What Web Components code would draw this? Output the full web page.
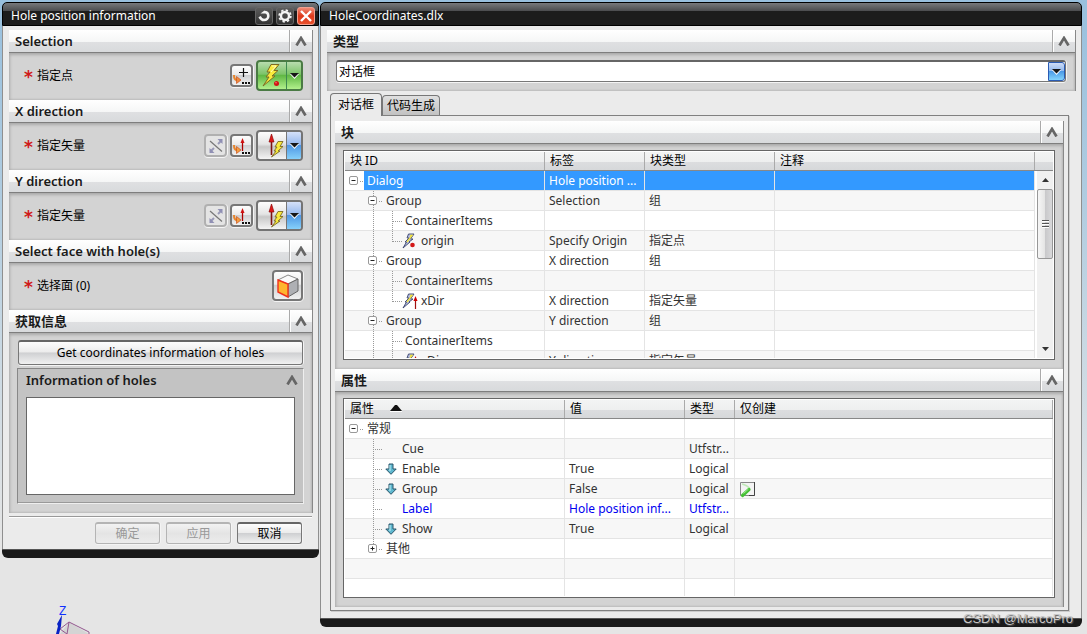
<!DOCTYPE html>
<html lang="zh-CN">
<head>
<meta charset="utf-8">
<title>HoleCoordinates.dlx</title>
<style>
  html {
    min-height: 100%;
    background: linear-gradient(#98c0de 0, #b0cce0 200px, #c8d8e3 340px, #e5e5e5 540px);
  }

  body {
    margin: 0;
    font: 12px/20px "Noto Sans", "Noto Sans CJK SC", sans-serif;
    color: #1a1a1a;
  }
</style>
</head>
<body>
<block-styler></block-styler>

<script>
// ----- Icons -----
const ICONS = {
  reset: [12, 12, `<path d="M6 2c3 0 4.300 1.800 4.300 4S8.600 10 6 10 2.500 8.600 1.600 6.600" fill="none" stroke="#f4f4f4" stroke-width="2.6"/><path d="M2.500 3.500h4v-3z" fill="#f4f4f4"/>`],
  gear: [14, 14, `<circle cx="7" cy="7" r="4" fill="none" stroke="#f4f4f4" stroke-width="2.4"/><circle cx="7" cy="7" r="5.8" fill="none" stroke="#f4f4f4" stroke-width="1.8" stroke-dasharray="2.3 2.255"/>`],
  close: [14, 14, `<path d="M2 2l10 10M12 2L2 12" stroke="#fff" stroke-width="2.4"/>`],
  up: [12, 10, `<path d="M1.500 9.500L6 2l4.500 7.500" fill="none" stroke="#666" stroke-width="2.7"/>`],
  down: [9, 9, `<path d="M0 3h9L4.5 8z" fill="#fff"/><path d="M0 2h9L4.5 6.5z" fill="#161616"/>`],
  sort: [12, 8, `<path d="M0 7h12v1H0z" fill="#fff"/><path d="M0 7l5-6h2l5 6z" fill="#111"/>`],
  tiny: [7, 4, `<path d="M0 4l3.5-4L7 4z" fill="#333"/>`],
  point: [20, 20, `<path d="M11.500 2v9M7 6.500h9" stroke="#111" stroke-width="1.2"/><path d="M2 9c0 4 1 5 3 5" fill="none" stroke="#e8852a" stroke-width="2"/><path d="M4.500 10.500l4.500 3.500-4.500 3.500z" fill="#f08a3c" stroke="#c8501c" stroke-width=".7"/><path d="M10 16h2v2h-2zm3 0h2v2h-2zm3 0h2v2h-2z" fill="#111"/>`],
  vector: [20, 20, `<path d="M10.500 6v9" stroke="#a00" stroke-width="1.3"/><path d="M8.500 7l2-5 2 5z" fill="#d01010"/><path d="M2 9c0 4 1 5 3 5" fill="none" stroke="#e8852a" stroke-width="2"/><path d="M4.500 10.500l4.500 3.500-4.500 3.500z" fill="#f5a040" stroke="#c8501c" stroke-width=".7"/><path d="M10 16h2v2h-2zm3 0h2v2h-2zm3 0h2v2h-2z" fill="#111"/>`],
  flip: [20, 20, `<path d="M4 5l12 10.500" stroke="#777" stroke-width="1.2"/><path d="M5 15l3-3M12 8l3-3" stroke="#9a9ab8" stroke-width="2"/><path d="M11.500 3h5v5zM3.500 12v5h5z" fill="#9090b4"/>`],
  bolt: [26, 26, `<path d="M12 1.500h8l-5 6h4l-6 5.500h3L4 23l6-9H7l4-5H8z" fill="#f8ea3c" stroke="#7d6a24" stroke-width="1"/><path d="M13 3h4l-5 6" fill="none" stroke="#fffbc0" stroke-width="1"/><circle cx="17.500" cy="20.500" r="2.500" fill="#d21414"/><circle cx="17" cy="19.700" r=".8" fill="#f77"/>`],
  boltVector: [26, 26, `<path d="M12.500 8v14" stroke="#7c1414" stroke-width="1.6"/><path d="M10 9l2.500-8L15 9z" fill="#e01818" stroke="#8e0c0c" stroke-width=".7"/><path d="M19 8.500h5l-3 5h3L19 18h2l-8.500 6L17 18h-2l3-4h-2z" fill="#f8ea3c" stroke="#7d6a24" stroke-width=".9"/>`],
  cube: [26, 26, `<path d="M13 2l10 4-10 5L3 7z" fill="#fafafa" stroke="#888"/><path d="M13 11l10-5v12l-10 6z" fill="#aeb0b4" stroke="#666"/><path d="M3 7l10 4v13L3 19z" fill="#ffb52e" stroke="#f0301c" stroke-width="1.4"/>`],
  originItem: [16, 16, `<path d="M6.500 1H12L8.500 6H11L7 9h1L1 15l3.500-6H3l4-4H5z" fill="#b7bfdc" stroke="#38426e" stroke-width=".9"/><path d="M8 2.500h2L6.500 7 5 9" fill="none" stroke="#f1e23e" stroke-width="1.3"/><circle cx="10.500" cy="12" r="2.300" fill="#d31818"/>`],
  vectorItem: [16, 16, `<path d="M6.500 1H12L8.500 6H11L7 9h1L1 15l3.500-6H3l4-4H5z" fill="#b7bfdc" stroke="#38426e" stroke-width=".9"/><path d="M8 2.500h2L6.500 7 5 9" fill="none" stroke="#f1e23e" stroke-width="1.3"/><path d="M13.500 6v10" stroke="#a01010" stroke-width="1.2"/><path d="M11.500 8l2-5 2 5z" fill="#c00"/>`],
  arrowItem: [12, 12, `<path d="M4 1h4v5h3.200L6 11.300.8 6H4z" fill="#5fb8cf" stroke="#28556a" stroke-width="1"/><path d="M5 2v6" stroke="#c8f2f8" stroke-width="1"/>`],
  check: [17, 17, `<path d="M1.500 1.500h14v13h-14z" fill="#f4f4f4" stroke="#888"/><path d="M15.500 1v13.500H10" fill="none" stroke="#444"/><path d="M3 3q5 1 8 5" fill="none" stroke="#c0e8b8" stroke-width="1.5"/><path d="M3.500 14.500L10 8.500" stroke="#44c034" stroke-width="3.2" stroke-linecap="round"/><path d="M4.500 12.500l5-4.500" stroke="#9cec8c"/>`]
};

function icon(name) {
  const [w, h, body] = ICONS[name];
  return `<svg width="${w}" height="${h}" viewBox="0 0 ${w} ${h}" aria-hidden="true">${body}</svg>`;
}

// shared look of the grey push buttons
const BUTTON_CSS = `
  button {
    display: flex;
    align-items: center;
    justify-content: center;
    box-sizing: border-box;
    margin: 0;
    padding: 0;
    border: 1px solid #777;
    border-top: 2px solid #666;
    border-radius: 3px;
    background: linear-gradient(#fdfdfd 0, #ececec 45%, #cfd0d2 50%, #f1f1f1 100%);
    box-shadow: 0 1px #f4f4f4, 1px 0 #f4f4f4;
    font: inherit;
    color: #000;
  }
  button:disabled {
    border-color: #b4b4b4;
    background: linear-gradient(#f2f2f2, #e4e4e4 50%, #ececec);
    color: #999;
  }
`;

// ----- Window with title bar -----
class NxWindow extends HTMLElement {
  constructor() {
    super();
    this.attachShadow({ mode: "open" }).innerHTML = `
      <style>
        :host { display: block; }
        header {
          display: flex;
          align-items: center;
          box-sizing: border-box;
          height: 24px;
          padding: 3px 3px 0 8px;
          border: 1px solid #000;
          border-radius: 5px 5px 0 0;
          background: linear-gradient(#77797c 0, #4b4c4e 8px, #1c1c1c 8px);
          color: #fff;
        }
        h1 { flex: 1; margin: 0; font-size: 12px; font-weight: 400; line-height: 20px; }
        main {
          padding: 4px 5px 0 6px;
          border: solid #8f8f8f;
          border-width: 0 1px;
          background: #ebebeb;
        }
        footer {
          height: 8px;
          border-top: 1px solid #555;
          border-radius: 0 0 6px 6px;
          background: #1a1a1a;
        }
      </style>
      <header><h1>${this.getAttribute("heading")}</h1><slot name="tools"></slot></header>
      <main><slot></slot></main>
      <footer></footer>
    `;
  }
}

class WindowTools extends HTMLElement {
  constructor() {
    super();
    this.attachShadow({ mode: "open" }).innerHTML = `
      <style>
        :host { display: flex; gap: 3px; }
        button {
          display: flex;
          align-items: center;
          justify-content: center;
          width: 18px;
          height: 18px;
          padding: 0;
          border: 1px solid #666;
          border-radius: 3px;
          background: linear-gradient(#5c5c5c, #333);
        }
        .close { border-color: #f0a090; background: linear-gradient(#f08a74, #dd3a1c 50%, #e8502c); }
      </style>
      <button aria-label="Reset">${icon("reset")}</button>
      <button aria-label="Settings">${icon("gear")}</button>
      <button class="close" aria-label="Close">${icon("close")}</button>
    `;
  }
}

// ----- Collapsible section -----
class NxSection extends HTMLElement {
  constructor() {
    super();
    this.attachShadow({ mode: "open" }).innerHTML = `
      <style>
        :host { display: block; border-right: 1px solid #888; }
        header {
          display: flex;
          height: 22px;
          border-bottom: 1px solid #7e7e7e;
          background: linear-gradient(#fff 0, #f5f6f6 12px, #dfe0e2 12px, #d8dadc 100%);
        }
        h2 { flex: 1; margin: 0; padding-left: 6px; font-size: 13px; font-weight: 600; line-height: 22px; }
        button {
          display: flex;
          align-items: center;
          justify-content: center;
          width: 23px;
          padding: 0;
          border: 0;
          border-left: 1px solid #aaa;
          background: none;
          box-shadow: inset 1px 0 #fff;
        }
        div {
          padding: var(--section-padding, 6px 8px 9px);
          background: #d3d3d3;
          box-shadow: inset 1px 2px 3px #aaa, inset -1px -1px 2px #bbb;
        }
      </style>
      <header>
        <h2>${this.getAttribute("heading")}</h2>
        <button aria-label="Collapse">${icon("up")}</button>
      </header>
      <div><slot></slot></div>
    `;
  }
}

// ----- Required input row: label and its buttons -----
class PickRow extends HTMLElement {
  constructor() {
    super();
    const kind = this.getAttribute("kind");
    const small = (name, off) => `<button class="small" aria-label="${name}" ${off ? "disabled" : ""}>${icon(name)}</button>`;
    const split = (name) => `
      <span class="split ${kind}">
        <button aria-label="${name}">${icon(name)}</button>
        <button class="menu" aria-label="Options">${icon("down")}</button>
      </span>`;
    const tools = {
      point: small("point") + split("bolt"),
      vector: small("flip", true) + small("vector") + split("boltVector"),
      face: `<button class="large" aria-label="Face">${icon("cube")}</button>`
    };

    this.attachShadow({ mode: "open" }).innerHTML = `
      <style>
        ${BUTTON_CSS}
        :host { display: flex; align-items: center; gap: 3px; height: 31px; }
        .star { width: 10px; color: #d01818; font: 700 17px/20px "DejaVu Sans", sans-serif; padding-top: 2px; }
        .label { flex: 1; color: #000; }
        svg { flex: none; }
        .small { width: 23px; height: 23px; border: 2px solid #777; border-radius: 4px; }
        .small:disabled { border-color: #b0b0b0; background: #e4e4e4; }
        .large { width: 31px; height: 31px; border: 2px solid #777; border-radius: 4px; }
        .split {
          display: flex;
          box-sizing: border-box;
          width: 47px;
          height: 31px;
          border: 2px solid #747474;
          border-radius: 4px;
          overflow: hidden;
          background: linear-gradient(#fdfdfd 0, #e4e4e4 45%, #c8c8c8 55%, #f4f4f4 100%);
        }
        .split button { flex: 1; border: 0; border-radius: 0; background: none; box-shadow: none; }
        .split .menu {
          flex: 0 0 15px;
          border-left: 1px solid #777;
          background: linear-gradient(#d4e0f8 0, #8fb4ec 50%, #4f98e4 50%, #86d0fa 100%);
        }
        .split.point { border-color: #4a7a44; background: linear-gradient(#b8dcae 0, #7cc468 45%, #60b844 50%, #b2f08c 100%); }
        .split.point .menu { border-left-color: #3f8a50; background: linear-gradient(#b8dcae 0, #7cc468 45%, #60b844 50%, #b2f08c 100%); }
      </style>
      <span class="star">*</span>
      <span class="label"><slot></slot></span>
      ${tools[kind]}
    `;
  }
}

// ----- Push button -----
class NxButton extends HTMLElement {
  constructor() {
    super();
    this.attachShadow({ mode: "open" }).innerHTML = `
      <style>
        ${BUTTON_CSS}
        :host { display: block; }
        button { width: 100%; height: var(--button-height, 22px); }
      </style>
      <button ${this.hasAttribute("disabled") ? "disabled" : ""}><slot></slot></button>
    `;
  }
}

// ----- Titled box around a text area -----
class InfoBox extends HTMLElement {
  constructor() {
    super();
    this.attachShadow({ mode: "open" }).innerHTML = `
      <style>
        :host {
          display: block;
          padding: 0 8px 8px;
          border: 1px solid #888;
          border-right-color: #eee;
          border-bottom-color: #eee;
          background: #c3c3c3;
          box-shadow: inset 0 -1px #999;
        }
        .head { display: flex; align-items: center; justify-content: space-between; height: 28px; }
        label { font-size: 13px; font-weight: 600; line-height: 22px; margin-bottom: 6px; }
        button { display: flex; margin: 0 -3px 6px 0; padding: 0; border: 0; background: none; }
        textarea {
          display: block;
          box-sizing: border-box;
          width: 100%;
          height: 98px;
          border: 1px solid #666;
          background: #fff;
          font: inherit;
          resize: none;
        }
      </style>
      <div class="head">
        <label for="info">Information of holes</label>
        <button aria-label="Collapse">${icon("up")}</button>
      </div>
      <textarea id="info" readonly></textarea>
    `;
  }
}

// ----- Drop-down -----
class NxSelect extends HTMLElement {
  constructor() {
    super();
    this.attachShadow({ mode: "open" }).innerHTML = `
      <style>
        :host {
          display: grid;
          height: 19px;
          border: 1px solid #777;
          border-top: 2px solid #666;
          border-radius: 3px;
          background: #fff;
          box-shadow: 0 1px #f4f4f4, 1px 0 #f4f4f4;
          overflow: hidden;
        }
        select, span { grid-area: 1 / 1; }
        select { appearance: none; padding: 0 2px; border: 0; background: none; font: inherit; line-height: 19px; color: #000; }
        span {
          display: flex;
          align-items: center;
          justify-content: center;
          justify-self: end;
          box-sizing: border-box;
          width: 17px;
          border: 1px solid #2a5cb4;
          border-radius: 0 3px 3px 0;
          background: linear-gradient(#cfdcf6 0, #8fb8ee 50%, #4c9ae6 50%, #84d4fc 100%);
          pointer-events: none;
        }
      </style>
      <select aria-label="类型"><option>对话框</option></select>
      <span>${icon("down")}</span>
    `;
  }
}

// ----- Tabs -----
class NxTabs extends HTMLElement {
  constructor() {
    super();
    this.attachShadow({ mode: "open" }).innerHTML = `
      <style>
        :host { display: block; }
        nav { display: flex; align-items: flex-end; height: 22px; }
        button {
          box-sizing: border-box;
          height: 20px;
          padding: 0 4px;
          border: 1px solid #777;
          border-bottom: 0;
          border-radius: 4px 4px 0 0;
          background: linear-gradient(#e0e0e0, #c2c2c2);
          font: inherit;
          line-height: 20px;
          color: #000;
        }
        button[aria-selected="true"] {
          height: 23px;
          margin-bottom: -1px;
          padding: 0 7px;
          background: #ebebeb;
          z-index: 1;
        }
        .panel { padding: 5px 4px 3px; border: 1px solid #808080; box-shadow: 1px 1px #ccc; }
      </style>
      <nav role="tablist">
        <button role="tab" aria-selected="true">对话框</button>
        <button role="tab" aria-selected="false">代码生成</button>
      </nav>
      <div class="panel" role="tabpanel"><slot></slot></div>
    `;
  }
}

// ----- Tree table -----
// level: depth of the node, box: "-" / "+" toggle, rails: x of the lines passing through
class TreeTable extends HTMLElement {
  connectedCallback() {
    const { columns, rows, scroll } = TABLES[this.getAttribute("data")];
    this.attachShadow({ mode: "open" }).innerHTML = `
      <style>
        :host {
          display: flex;
          height: var(--table-height);
          padding: 1px;
          border: 1px solid #666;
          background: #fff;
          overflow: hidden;
          color: #333;
        }
        .view { flex: 1; overflow: hidden; }
        table { width: 100%; table-layout: fixed; border-collapse: separate; border-spacing: 0; }
        th, .corner {
          box-sizing: border-box;
          height: 19px;
          border-bottom: 1px solid #888;
          background: linear-gradient(#f3f4f4 0, #eeefef 10px, #dcdddf 10px, #d6d8da 100%);
        }
        th {
          padding: 0 5px;
          font-weight: 400;
          line-height: 18px;
          text-align: left;
          color: #000;
          box-shadow: inset -1px 0 #aaa;
        }
        th svg { margin-left: 16px; vertical-align: 1px; }
        td {
          height: 20px;
          padding: 0 4px;
          line-height: 20px;
          white-space: nowrap;
          overflow: hidden;
          box-shadow: inset -1px -1px #e4e4e4;
        }
        td:first-child { padding: 0; }
        tr:nth-child(even) td { background: #f7f7f7; }
        tr.selected td { background: #3399ff; color: #fff; }
        tr.selected td:first-child { background: linear-gradient(90deg, #fff 19px, #3399ff 19px); }
        tr.edited td { color: #0000f0; }
        .node { display: flex; align-items: center; height: 20px; }
        .node > svg { flex: none; }
        td > svg { display: block; }
        .mark { display: flex; width: var(--mark-width, 19px); }
        .side { display: flex; flex-direction: column; width: 18px; }
        .bar { flex: 1; display: flex; flex-direction: column; margin-left: 2px; background: #f0f0f0; }
        .bar button { display: flex; align-items: center; justify-content: center; height: 18px; padding: 0; border: 0; background: none; }
        .bar .dec svg { transform: rotate(180deg); }
        .thumb {
          flex: 0 0 68px;
          display: flex;
          align-items: center;
          justify-content: center;
          border: 1px solid #979797;
          border-radius: 2px;
          background: linear-gradient(90deg, #f6f6f6, #e4e4e4 50%, #c8c8ca 50%, #d8d8da);
        }
        .grip { width: 7px; height: 8px; background: repeating-linear-gradient(#555 0 1px, #fff 1px 2px, transparent 2px 3px); }
        .room { flex: 1; }
      </style>
      <div class="view">
        <table>
          <colgroup>${columns.map((c) => `<col ${c.width ? `style="width: ${c.width}px"` : ""}>`).join("")}</colgroup>
          <thead><tr>${columns.map((c) => `<th>${c.name}${c.sorted ? icon("sort") : ""}</th>`).join("")}</tr></thead>
          <tbody>${rows.map((row) => this.row(row, columns.length)).join("")}</tbody>
        </table>
      </div>
      ${scroll ? `
        <div class="side">
          <div class="corner"></div>
          <div class="bar">
            <button aria-label="Scroll up">${icon("tiny")}</button>
            <div class="thumb"><span class="grip"></span></div>
            <span class="room"></span>
            <button class="dec" aria-label="Scroll down">${icon("tiny")}</button>
          </div>
        </div>` : ""}
    `;
  }

  row(row, count) {
    const cells = [];
    for (let i = 1; i < count; i++) {
      cells.push(`<td>${(row.cells && row.cells[i - 1]) || ""}</td>`);
    }
    return `<tr class="${row.state || ""}"><td>${row.name ? this.node(row) : ""}</td>${cells.join("")}</tr>`;
  }

  node(row) {
    const line = (x1, y1, x2, y2) => `<path d="M${x1} ${y1}L${x2} ${y2}" stroke="#999" stroke-dasharray="1 1"/>`;
    const x = [8, 27, 47][row.level];
    const width = row.box ? x + 14 : row.level === 1 ? 40 : row.icon ? 57 : 60;
    let art = (row.rails || []).map(([rx, from, to]) => line(rx + 0.5, from, rx + 0.5, to)).join("");

    if (row.box) {
      art += `
        <rect x="${x - 3.5}" y="5.5" width="8" height="8" rx="1.5" fill="#fff" stroke="#999"/>
        <path d="M${x - 1.5} 9.5h4${row.box === "+" ? "m-2 -2v4" : ""}" stroke="#222"/>
        ${line(x + 7, 10.5, x + 10, 10.5)}`;
    } else {
      art += line(x + 1, 10.5, x + 10, 10.5);
    }
    const mark = row.icon === undefined ? "" : `<span class="mark">${row.icon ? icon(row.icon) : ""}</span>`;
    return `<div class="node"><svg width="${width}" height="20" viewBox="0 0 ${width} 20">${art}</svg>${mark}${row.name}</div>`;
  }
}

const TRUNK = [28, 0, 20];
const TABLES = {
  blocks: {
    scroll: true,
    columns: [{ name: "块 ID", width: 200 }, { name: "标签", width: 100 }, { name: "块类型", width: 130 }, { name: "注释" }],
    rows: [
      { level: 0, box: "-", name: "Dialog", state: "selected", cells: ["Hole position ..."] },
      { level: 1, box: "-", name: "Group", rails: [TRUNK], cells: ["Selection", "组"] },
      { level: 2, name: "ContainerItems", rails: [TRUNK, [47, 0, 20]] },
      { level: 2, name: "origin", icon: "originItem", rails: [TRUNK, [47, 0, 11]], cells: ["Specify Origin", "指定点"] },
      { level: 1, box: "-", name: "Group", rails: [TRUNK], cells: ["X direction", "组"] },
      { level: 2, name: "ContainerItems", rails: [TRUNK, [47, 0, 20]] },
      { level: 2, name: "xDir", icon: "vectorItem", rails: [TRUNK, [47, 0, 11]], cells: ["X direction", "指定矢量"] },
      { level: 1, box: "-", name: "Group", rails: [TRUNK], cells: ["Y direction", "组"] },
      { level: 2, name: "ContainerItems", rails: [TRUNK, [47, 0, 20]] },
      { level: 2, name: "yDir", icon: "vectorItem", rails: [TRUNK, [47, 0, 11]], cells: ["Y direction", "指定矢量"] }
    ]
  },
  properties: {
    columns: [{ name: "属性", width: 220, sorted: true }, { name: "值", width: 120 }, { name: "类型", width: 50 }, { name: "仅创建" }],
    rows: [
      { level: 0, box: "-", name: "常规" },
      { level: 1, name: "Cue", icon: "", rails: [TRUNK], cells: ["", "Utfstr..."] },
      { level: 1, name: "Enable", icon: "arrowItem", rails: [TRUNK], cells: ["True", "Logical"] },
      { level: 1, name: "Group", icon: "arrowItem", rails: [TRUNK], cells: ["False", "Logical", icon("check")] },
      { level: 1, name: "Label", icon: "", state: "edited", rails: [TRUNK], cells: ["Hole position inf...", "Utfstr..."] },
      { level: 1, name: "Show", icon: "arrowItem", rails: [TRUNK], cells: ["True", "Logical"] },
      { level: 1, box: "+", name: "其他", rails: [[28, 0, 6]] },
      {},
      {}
    ]
  }
};

// ----- Corner of the graphics view behind the dialogs -----
class AxisTriad extends HTMLElement {
  constructor() {
    super();
    this.attachShadow({ mode: "open" }).innerHTML = `
      <style>
        :host { display: block; }
        svg { display: block; }
        text { font: 12px "Liberation Sans", sans-serif; fill: #1030ff; }
      </style>
      <svg width="40" height="30" viewBox="0 0 40 30">
        <text x="6" y="11">Z</text>
        <path d="M7 30L16 18l20 12z" fill="#d4d4d4"/>
        <path d="M7 25l9-7 20 10v2M16 18l-2 12M7 25l7 5" fill="none" stroke="#93578f"/>
        <path d="M9 11L4 20l1 2-2 8h3l2-8z" fill="#0822c4"/>
      </svg>
    `;
  }
}

// ----- Page -----
class BlockStyler extends HTMLElement {
  constructor() {
    super();
    this.attachShadow({ mode: "open" }).innerHTML = `
      <style>
        :host { position: relative; display: flex; align-items: flex-start; gap: 1px; padding: 2px 5px 0 2px; }
        .left { flex: 0 0 317px; }
        .right { flex: 1; }
        .left nx-section { --section-padding: 7px 9px 9px 15px; }
        .left .info { --section-padding: 7px 8px 9px; }
        .info nx-button { --button-height: 25px; margin: 0 1px 3px; }
        .right .type { --section-padding: 7px 9px 9px; }
        nx-tabs { margin: 2px 7px 0 3px; }
        .actions {
          display: flex;
          justify-content: flex-end;
          gap: 6px;
          margin: 3px 1px 0 0;
          padding: 5px 10px 5px 0;
          border-top: 1px solid #999;
          box-shadow: inset 0 1px #fff;
        }
        .actions nx-button { width: 65px; }
        .end { height: 7px; }
        .blocks { --table-height: 206px; }
        .properties { --table-height: 196px; --mark-width: 17px; }
        axis-triad { margin: 46px 0 0 51px; }
        .credit {
          position: absolute;
          right: 14px;
          bottom: 6px;
          font: 13px/18px "Liberation Sans", sans-serif;
          color: #c8c8c8;
          text-shadow: 1px 1px 1px #555;
        }
      </style>
      <div class="left">
        <nx-window heading="Hole position information">
          <window-tools slot="tools"></window-tools>
          <nx-section heading="Selection"><pick-row kind="point">指定点</pick-row></nx-section>
          <nx-section heading="X direction"><pick-row kind="vector">指定矢量</pick-row></nx-section>
          <nx-section heading="Y direction"><pick-row kind="vector">指定矢量</pick-row></nx-section>
          <nx-section heading="Select face with hole(s)"><pick-row kind="face">选择面 (0)</pick-row></nx-section>
          <nx-section class="info" heading="获取信息">
            <nx-button>Get coordinates information of holes</nx-button>
            <info-box></info-box>
          </nx-section>
          <div class="actions">
            <nx-button disabled>确定</nx-button>
            <nx-button disabled>应用</nx-button>
            <nx-button>取消</nx-button>
          </div>
        </nx-window>
        <axis-triad></axis-triad>
      </div>
      <nx-window class="right" heading="HoleCoordinates.dlx">
        <nx-section class="type" heading="类型"><nx-select></nx-select></nx-section>
        <nx-tabs>
          <nx-section heading="块"><tree-table class="blocks" data="blocks"></tree-table></nx-section>
          <nx-section heading="属性"><tree-table class="properties" data="properties"></tree-table></nx-section>
        </nx-tabs>
        <div class="end"></div>
      </nx-window>
      <span class="credit">CSDN @MarcoPro</span>
    `;
  }
}

customElements.define("nx-window", NxWindow);
customElements.define("window-tools", WindowTools);
customElements.define("nx-section", NxSection);
customElements.define("pick-row", PickRow);
customElements.define("nx-button", NxButton);
customElements.define("info-box", InfoBox);
customElements.define("nx-select", NxSelect);
customElements.define("nx-tabs", NxTabs);
customElements.define("tree-table", TreeTable);
customElements.define("axis-triad", AxisTriad);
customElements.define("block-styler", BlockStyler);
</script>
</body>
</html>
